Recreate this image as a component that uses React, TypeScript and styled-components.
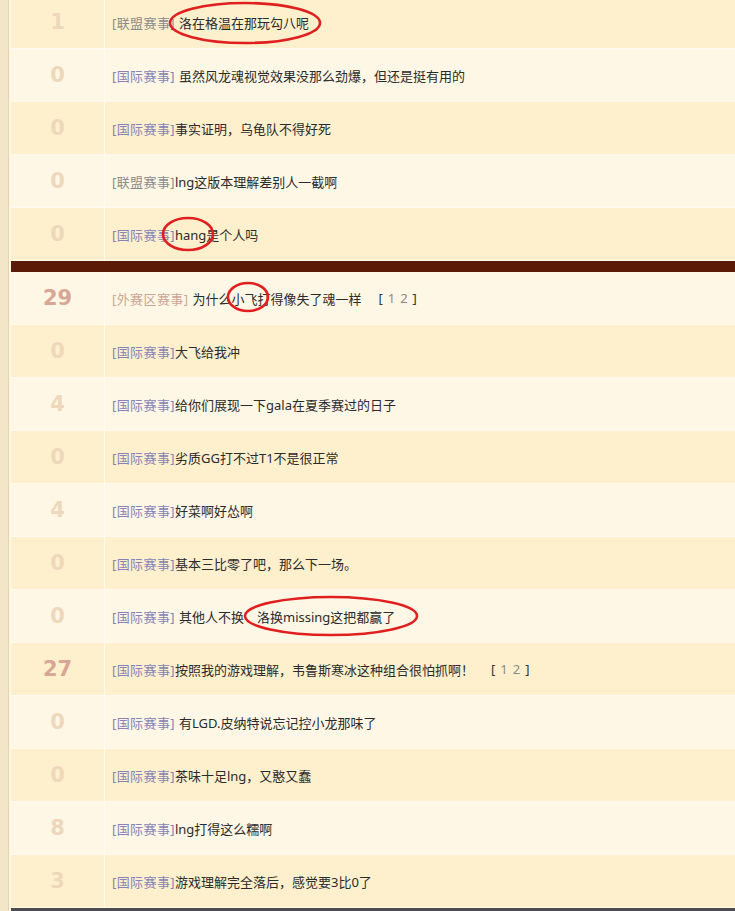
import React from "react";
import styled, { createGlobalStyle } from "styled-components";

const GlobalStyle = createGlobalStyle`
  html, body {
    margin: 0;
    padding: 0;
    background: #fff6e4;
  }
`;

const Page = styled.div`
  position: relative;
  height: 911px;
  overflow: hidden;
  display: flex;
  font-family: "Noto Sans", "Noto Sans CJK SC", sans-serif;
`;

const Side = styled.div`
  width: 8px;
  flex: none;
  background: #f3e5c8;
  border-right: 1px solid #e6d3ae;
`;

const Board = styled.div`
  flex: 1;
  display: flex;
  flex-direction: column;
  padding-left: 2px;
  margin-top: -4px;
  background: #fff7e6;
`;

const Section = styled.div`
  display: flex;
  flex-direction: column;
`;

const Divider = styled.div`
  height: 11px;
  background: #5a1a05;
`;

const BottomBar = styled.div`
  height: 3px;
  background: #4c4c4c;
`;

const Row = styled.div<{ $dark: boolean }>`
  display: grid;
  grid-template-columns: 93px 1fr;
  column-gap: 1px;
  height: 52px;
  border-bottom: 1px solid #fffaf0;
  background: #fffaf0;

  & > div {
    background: ${(p) => (p.$dark ? "#fff0cd" : "#fff7e5")};
  }
`;

const Count = styled.div<{ $hot: boolean }>`
  display: flex;
  align-items: center;
  justify-content: center;
  font-family: "DejaVu Sans", Verdana, sans-serif;
  font-weight: bold;
  font-size: 21px;
  color: ${(p) => (p.$hot ? "#d8a695" : "#eed8bc")};
`;

const Subject = styled.div`
  display: flex;
  align-items: center;
  padding-left: 7px;
  font-size: 13px;
  color: #2b2b2b;
  white-space: pre;
`;

const TAG_COLORS = {
  intl: "#8783b6",
  league: "#8c8c8c",
  outer: "#c9a797",
};

const Tag = styled.span<{ $kind: keyof typeof TAG_COLORS; $space: boolean }>`
  color: ${(p) => TAG_COLORS[p.$kind]};
  letter-spacing: 0.4px;
  margin-right: ${(p) => (p.$space ? "4px" : "0")};
`;

const Pager = styled.span`
  display: inline-flex;
  gap: 5px;
  margin-left: 17px;
  color: #333;
`;

const PageNo = styled.span`
  color: #8a8a8a;
`;

const Marks = styled.svg`
  position: absolute;
  left: 0;
  top: 0;
  pointer-events: none;
`;

type Topic = {
  n: number;
  kind: keyof typeof TAG_COLORS;
  title: string;
  space?: boolean;
  pages?: boolean;
};

const TAG_TEXT = {
  intl: "国际赛事",
  league: "联盟赛事",
  outer: "外赛区赛事",
};

const PINNED: Topic[] = [
  { n: 1, kind: "league", space: true, title: "洛在格温在那玩勾八呢" },
  { n: 0, kind: "intl", space: true, title: "虽然风龙魂视觉效果没那么劲爆，但还是挺有用的" },
  { n: 0, kind: "intl", title: "事实证明，乌龟队不得好死" },
  { n: 0, kind: "league", title: "lng这版本理解差别人一截啊" },
  { n: 0, kind: "intl", title: "hang是个人吗" },
];

const TOPICS: Topic[] = [
  { n: 29, kind: "outer", space: true, title: "为什么小飞打得像失了魂一样", pages: true },
  { n: 0, kind: "intl", title: "大飞给我冲" },
  { n: 4, kind: "intl", title: "给你们展现一下gala在夏季赛过的日子" },
  { n: 0, kind: "intl", title: "劣质GG打不过T1不是很正常" },
  { n: 4, kind: "intl", title: "好菜啊好怂啊" },
  { n: 0, kind: "intl", title: "基本三比零了吧，那么下一场。" },
  { n: 0, kind: "intl", space: true, title: "其他人不换　洛换missing这把都赢了" },
  { n: 27, kind: "intl", title: "按照我的游戏理解，韦鲁斯寒冰这种组合很怕抓啊！", pages: true },
  { n: 0, kind: "intl", space: true, title: "有LGD.皮纳特说忘记控小龙那味了" },
  { n: 0, kind: "intl", title: "茶味十足lng，又憨又蠢" },
  { n: 8, kind: "intl", title: "lng打得这么糯啊" },
  { n: 3, kind: "intl", title: "游戏理解完全落后，感觉要3比0了" },
];

// red circles someone drew on the screenshot
const CIRCLES = [
  { cx: 245, cy: 23, rx: 75, ry: 20 },
  { cx: 188, cy: 234, rx: 25, ry: 16 },
  { cx: 248, cy: 297, rx: 20, ry: 14 },
  { cx: 331, cy: 616, rx: 86, ry: 19 },
];

function TopicRow({ t, dark }: { t: Topic; dark: boolean }) {
  return (
    <Row $dark={dark}>
      <Count $hot={t.n > 9}>{t.n}</Count>
      <Subject>
        <Tag $kind={t.kind} $space={!!t.space}>
          [{TAG_TEXT[t.kind]}]
        </Tag>
        {t.title}
        {t.pages && (
          <Pager>
            <span>[</span>
            <PageNo>1</PageNo>
            <PageNo>2</PageNo>
            <span>]</span>
          </Pager>
        )}
      </Subject>
    </Row>
  );
}

export default function App() {
  return (
    <>
      <GlobalStyle />
      <Page>
        <Side />
        <Board>
          <Section>
            {PINNED.map((t, i) => (
              <TopicRow key={i} t={t} dark={i % 2 === 0} />
            ))}
          </Section>
          <Divider />
          <Section>
            {TOPICS.map((t, i) => (
              <TopicRow key={i} t={t} dark={i % 2 === 1} />
            ))}
          </Section>
          <BottomBar />
        </Board>
        <Marks width="735" height="911">
          {CIRCLES.map((c, i) => (
            <ellipse
              key={i}
              cx={c.cx}
              cy={c.cy}
              rx={c.rx}
              ry={c.ry}
              fill="none"
              stroke="#e01f1f"
              strokeWidth="2.6"
            />
          ))}
        </Marks>
      </Page>
    </>
  );
}
